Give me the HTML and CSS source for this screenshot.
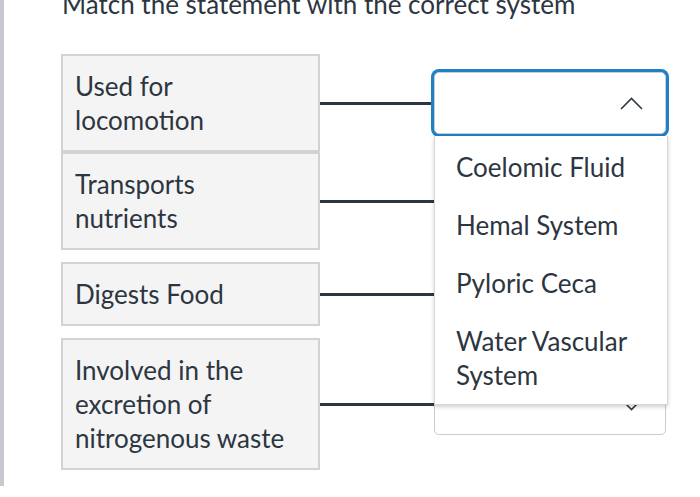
FILE: index.html
```html
<!DOCTYPE html>
<html lang="en">
<head>
<meta charset="utf-8">
<title>Match</title>
<link rel="stylesheet" href="styles.css">
</head>
<body>
<div class="frame">
  <h1 class="title">Match the statement with the correct system</h1>
  <div class="rows">
    <div class="row">
      <div class="stmt">Used for<br>locomotion</div>
      <div class="connector"></div>
      <div class="select focused">
        <svg class="chev" width="23" height="13" viewBox="0 0 23 13"><path d="M1 12 L11.5 1.5 L22 12" fill="none" stroke="#2d3b45" stroke-width="1.6"/></svg>
        <ul class="menu">
          <li>Coelomic Fluid</li>
          <li>Hemal System</li>
          <li>Pyloric Ceca</li>
          <li>Water Vascular System</li>
        </ul>
      </div>
    </div>
    <div class="row">
      <div class="stmt">Transports<br>nutrients</div>
      <div class="connector"></div>
      <div class="select">
        <svg class="chev" width="23" height="13" viewBox="0 0 23 13"><path d="M1 1 L11.5 11.5 L22 1" fill="none" stroke="#2d3b45" stroke-width="1.6"/></svg>
      </div>
    </div>
    <div class="row spaced">
      <div class="stmt">Digests Food</div>
      <div class="connector"></div>
      <div class="select">
        <svg class="chev" width="23" height="13" viewBox="0 0 23 13"><path d="M1 1 L11.5 11.5 L22 1" fill="none" stroke="#2d3b45" stroke-width="1.6"/></svg>
      </div>
    </div>
    <div class="row spaced">
      <div class="stmt">Involved in the<br>excretion of<br>nitrogenous waste</div>
      <div class="connector"></div>
      <div class="select">
        <svg class="chev" width="23" height="13" viewBox="0 0 23 13"><path d="M1 1 L11.5 11.5 L22 1" fill="none" stroke="#2d3b45" stroke-width="1.6"/></svg>
      </div>
    </div>
  </div>
</div>
</body>
</html>
```
FILE: styles.css
```css
html, body {
  margin: 0;
  padding: 0;
  background: #ffffff;
}
body {
  font-family: Lato, "Open Sans", sans-serif;
  color: #2d3640;
  overflow: hidden;
}
.frame {
  border-left: 4px solid #c8c8d0;
  height: 497px;
  box-sizing: border-box;
  padding-left: 57px;
  padding-right: 34px;
}
.title {
  margin: -11px 0 0 1px;
  font-size: 26px;
  line-height: 30px;
  font-weight: 400;
  white-space: nowrap;
}
.rows {
  margin-top: 35px;
  display: flex;
  flex-direction: column;
}
.row {
  display: flex;
  align-items: center;
}
.row.spaced {
  margin-top: 12px;
}
.stmt {
  width: 259px;
  box-sizing: border-box;
  border: 2px solid #d0d2d4;
  background: #f4f4f5;
  padding: 13px 12px;
  font-size: 26px;
  line-height: 34px;
}
.connector {
  flex: 1;
  height: 3px;
  background: #2d3540;
}
.select {
  position: relative;
  width: 232px;
  height: 62px;
  box-sizing: border-box;
  border: 1px solid #c7cdd1;
  border-radius: 5px;
  background: #fff;
  display: flex;
  align-items: center;
  justify-content: flex-end;
  padding-right: 22px;
}
.select.focused {
  box-shadow: 0 0 0 3px #1f80c6;
  z-index: 2;
}
.chev {
  display: block;
}
.menu {
  position: absolute;
  top: 100%;
  left: -1px;
  width: 234px;
  margin: 3px 0 0;
  padding: 2px 0 0;
  box-sizing: border-box;
  height: 269px;
  list-style: none;
  background: #fff;
  border: 1px solid #d6d6d6;
  border-top: none;
  box-shadow: 0 2px 4px rgba(0, 0, 0, 0.18);
  z-index: 3;
}
.menu li {
  padding: 12px 20px 12px 21px;
  font-size: 26px;
  line-height: 34px;
}
```
